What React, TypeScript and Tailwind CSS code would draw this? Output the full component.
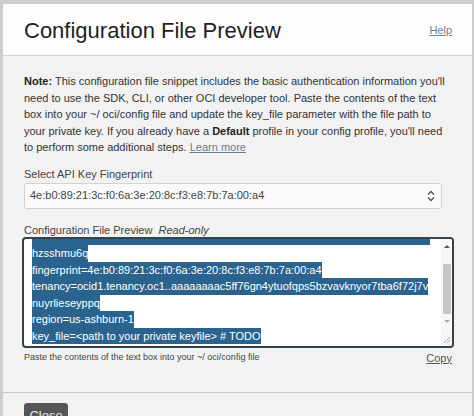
import React from "react";

const Line = ({ text }: { text: string }) => (
  <div className="h-[16.5px] whitespace-nowrap">
    <span className="inline-block h-full bg-[#2a648e] text-white leading-[16.5px]">{text}</span>
  </div>
);

export default function App() {
  return (
    <div className="w-[474px] h-[416px] overflow-hidden bg-[#cdcdcd] pl-[3px] pt-[4px] pr-[2px] font-['Liberation_Sans',Arial,sans-serif]">
      <div className="h-[412px] bg-[#f2f2f2] flex flex-col">
        {/* header */}
        <div className="h-[52px] shrink-0 bg-[#fdfdfd] border-b border-[#cfcfcf] flex items-center justify-between pl-[21px] pr-[20px]">
          <div className="text-[22px] leading-none text-[#1f1f1f] pt-[2px]">Configuration File Preview</div>
          <a className="text-[11px] text-[#6a8495] underline pt-[2px]">Help</a>
        </div>
        {/* body */}
        <div className="pl-[21px] pr-[20px] pt-[17px] flex flex-col">
          <div className="text-[11px] leading-[16.5px] text-[#333]">
            <div className="whitespace-nowrap"><b className="text-[#222]">Note:</b> This configuration file snippet includes the basic authentication information you'll</div>
            <div className="whitespace-nowrap">need to use the SDK, CLI, or other OCI developer tool. Paste the contents of the text</div>
            <div className="whitespace-nowrap">box into your ~/ oci/config file and update the key_file parameter with the file path to</div>
            <div className="whitespace-nowrap">your private key. If you already have a <b className="text-[#222]">Default</b> profile in your config profile, you'll need</div>
            <div className="whitespace-nowrap">to perform some additional steps. <a className="text-[#5e7f98] underline">Learn more</a></div>
          </div>
          <div className="mt-[11px] text-[11px] leading-[14px] text-[#444]">Select API Key Fingerprint</div>
          <div className="mt-[2px] h-[26px] w-[418px] rounded-[3px] border border-[#d3d3d3] bg-[#fafafa] flex items-center justify-between pl-[5px] pr-[6px]">
            <span className="text-[11px] text-[#444]">4e:b0:89:21:3c:f0:6a:3e:20:8c:f3:e8:7b:7a:00:a4</span>
            <svg width="8" height="12" viewBox="0 0 8 12">
              <path d="M1 4.5 L4 1.5 L7 4.5 M1 7.5 L4 10.5 L7 7.5" fill="none" stroke="#555" strokeWidth="1.4" />
            </svg>
          </div>
          <div className="mt-[14px] text-[11px] leading-[14px] text-[#444]">
            Configuration File Preview&nbsp;&nbsp;<i>Read-only</i>
          </div>
          <div className="-ml-[2px] h-[111px] w-[432px] rounded-[4px] border-2 border-[#33444c] bg-white flex overflow-hidden">
            <div className="flex-1 overflow-hidden pl-[8px] text-[11px]">
              <div className="-mt-[10px]">
                <div className="h-[16.5px] w-[398px] bg-[#2a648e]" />
                <div className="h-[16.5px] whitespace-nowrap flex">
                  <span className="inline-block h-full bg-[#2a648e] text-white leading-[16.5px]">hzsshmu6q</span>
                </div>
                <Line text="fingerprint=4e:b0:89:21:3c:f0:6a:3e:20:8c:f3:e8:7b:7a:00:a4" />
                <Line text="tenancy=ocid1.tenancy.oc1..aaaaaaaac5ff76gn4ytuofqps5bzvavknyor7tba6f72j7v" />
                <Line text="nuyrlieseyppq" />
                <Line text="region=us-ashburn-1" />
                <Line text="key_file=<path to your private keyfile> # TODO" />
              </div>
            </div>
            {/* scrollbar */}
            <div className="w-[11px] shrink-0 flex flex-col items-center bg-[#f7f7f7] pt-[5px] pb-[2px]">
              <svg width="6" height="5" viewBox="0 0 6 5"><path d="M0 4 L3 1 L6 4 Z" fill="#555" /></svg>
              <div className="mt-[15px] w-[8px] h-[50px] bg-[#c6c6c6] rounded-[1px]" />
              <div className="mt-[5px]">
                <svg width="6" height="5" viewBox="0 0 6 5"><path d="M0 1 L3 4 L6 1 Z" fill="#aaa" /></svg>
              </div>
              <div className="mt-auto">
                <svg width="9" height="9" viewBox="0 0 9 9">
                  <path d="M8 2 L2 8 M8 5 L5 8" stroke="#aaa" strokeWidth="1" />
                </svg>
              </div>
            </div>
          </div>
          <div className="mt-[2px] flex items-center justify-between">
            <span className="text-[9px] text-[#444]">Paste the contents of the text box into your ~/ oci/config file</span>
            <a className="text-[11px] text-[#555] underline">Copy</a>
          </div>
        </div>
        {/* footer */}
        <div className="mt-auto h-[24px] border-t border-[#c9c9c9] bg-[#f2f2f2] pl-[21px] pt-[10px]">
          <div className="w-[44px] h-[24px] rounded-[3px] bg-[#555] text-[#e5e5e5] text-[13px] flex justify-center pt-[3px]">
            Close
          </div>
        </div>
      </div>
    </div>
  );
}
